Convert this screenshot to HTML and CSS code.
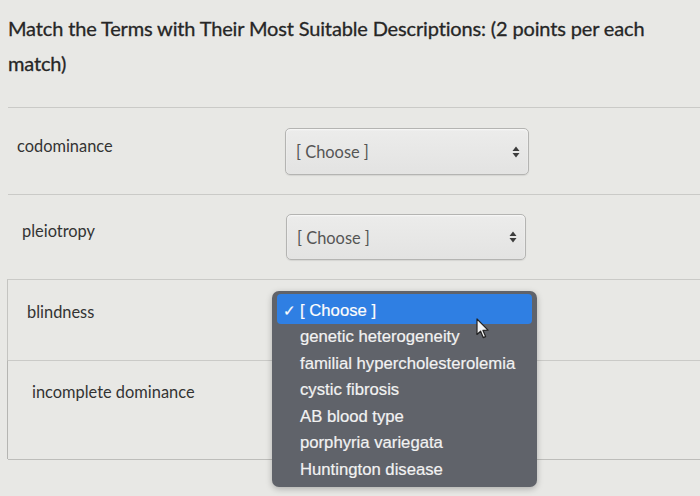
FILE: index.html
```html
<!DOCTYPE html>
<html>
<head>
<meta charset="utf-8">
<link rel="stylesheet" href="styles.css">
</head>
<body>
<div class="question">
  <h1 class="title">Match the Terms with Their Most Suitable Descriptions: (2 points per each match)</h1>
  <div class="answers">
    <div class="row">
      <span class="term">codominance</span>
      <div class="select"><span class="value">[ Choose ]</span>
        <svg class="updown" width="8" height="12" viewBox="0 0 8 12"><path d="M4 0.5 L7.5 5 L0.5 5 Z M4 11.5 L7.5 7 L0.5 7 Z" fill="#3d3d3d"/></svg>
      </div>
    </div>
    <div class="row">
      <span class="term">pleiotropy</span>
      <div class="select"><span class="value">[ Choose ]</span>
        <svg class="updown" width="8" height="12" viewBox="0 0 8 12"><path d="M4 0.5 L7.5 5 L0.5 5 Z M4 11.5 L7.5 7 L0.5 7 Z" fill="#3d3d3d"/></svg>
      </div>
    </div>
    <div class="row">
      <span class="term">blindness</span>
    </div>
    <div class="row">
      <span class="term">incomplete dominance</span>
    </div>
  </div>
</div>

<div class="menu">
  <div class="item selected"><span class="check">✓</span>[ Choose ]</div>
  <div class="item">genetic heterogeneity</div>
  <div class="item">familial hypercholesterolemia</div>
  <div class="item">cystic fibrosis</div>
  <div class="item">AB blood type</div>
  <div class="item">porphyria variegata</div>
  <div class="item">Huntington disease</div>
</div>

<svg class="cursor" width="14" height="22" viewBox="0 0 14 22">
  <path d="M1 1 L1 16.5 L4.6 13.2 L7.2 19.6 L9.6 18.6 L7 12.4 L12 12.2 Z" fill="#f4f4f4" stroke="#222" stroke-width="1.2" stroke-linejoin="round"/>
</svg>
</body>
</html>
```
FILE: styles.css
```css
html, body {
  margin: 0;
  padding: 0;
  background: #e8e8e5;
  width: 700px;
  height: 496px;
  overflow: hidden;
}

.question {
  padding-left: 8px;
}

.title {
  margin: 0;
  padding: 11px 40px 26px 0;
  font-family: Lato, "Open Sans", sans-serif;
  font-size: 20px;
  font-weight: 400;
  line-height: 35px;
  color: #262626;
  letter-spacing: -0.15px;
  -webkit-text-stroke: 0.3px #262626;
}

.answers {
  border-bottom: 1px solid #bdbdba;
}

.row {
  display: flex;
  align-items: flex-start;
  border-top: 1px solid #cacac7;
  font-family: Lato, "Open Sans", sans-serif;
  font-size: 16.4px;
  color: #333;
}

.term {
  display: block;
  width: 268px;
  line-height: 20px;
  flex: none;
}

.row:nth-child(1) { height: 86px; }
.row:nth-child(1) .term { padding: 28px 0 0 9px; width: 268px; }
.row:nth-child(1) .select { margin-top: 20px; width: 244px; height: 47px; }

.row:nth-child(2) { height: 84px; }
.row:nth-child(2) .term { padding: 26px 0 0 14px; width: 264px; }
.row:nth-child(2) .select { margin-top: 19px; width: 240px; height: 46px; }

.row:nth-child(3) { height: 80px; border-left: 1px solid #c4c4c1; margin-left: -1px; }
.row:nth-child(3) .term { padding: 22px 0 0 19px; }

.row:nth-child(4) { height: 98px; border-left: 1px solid #b5b5b2; margin-left: -1px; }
.row:nth-child(4) .term { padding: 21px 0 0 24px; }

.select {
  display: flex;
  align-items: center;
  justify-content: space-between;
  box-sizing: border-box;
  padding: 0 8px 0 10px;
  border: 1px solid #b4b4b2;
  border-radius: 5px;
  background: linear-gradient(#ececeb, #e3e3e2);
  box-shadow: inset 0 1px 2px rgba(255,255,255,0.7), 0 1px 1px rgba(0,0,0,0.08);
  color: #555;
  font-size: 16.4px;
}

.select .value {
  line-height: 20px;
  margin-top: 1px;
}

.updown {
  display: block;
}

.menu {
  position: absolute;
  left: 272px;
  top: 291px;
  width: 255px;
  height: 188px;
  padding: 3px 5px 5px;
  background: #60636a;
  border-radius: 7px;
  box-shadow: 0 2px 6px rgba(0,0,0,0.25);
  font-family: "Liberation Sans", Arial, sans-serif;
  font-size: 16.7px;
  color: #f2f2f2;
  -webkit-text-stroke: 0.2px #f2f2f2;
}

.item {
  line-height: 26.5px;
  padding-left: 23px;
  white-space: nowrap;
}

.item.selected {
  display: flex;
  align-items: center;
  padding: 4px 0 0 6px;
  height: 26px;
  line-height: 26px;
  background: #2f7fe3;
  border-radius: 4px;
  color: #fff;
}

.check {
  width: 17px;
  font-size: 15px;
}

.cursor {
  position: absolute;
  left: 476px;
  top: 318px;
}
```
